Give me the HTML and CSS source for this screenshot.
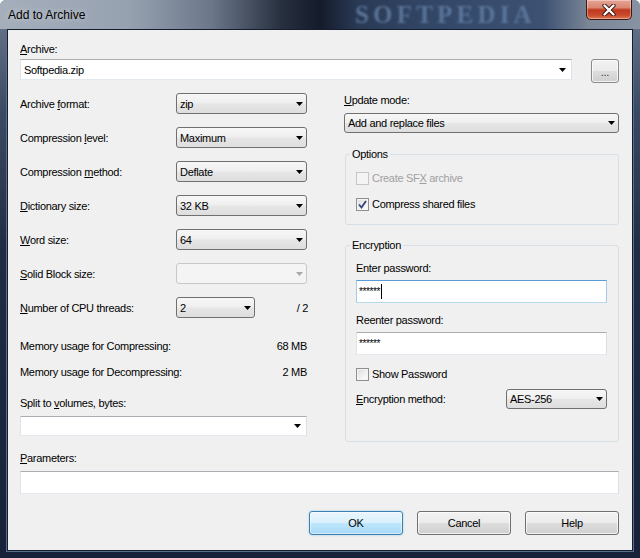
FILE: index.html
```html
<!DOCTYPE html>
<html>
<head>
<meta charset="utf-8">
<title>Add to Archive</title>
<link rel="stylesheet" href="styles.css">
</head>
<body>
<div class="window">
  <div class="titlebar">
    <span class="title">Add to Archive</span>
    <span class="watermark">SOFTPEDIA</span>
    <div class="close-btn">
      <svg width="14" height="12" viewBox="0 0 14 12"><path d="M2.5 1.5L11.5 10.5M11.5 1.5L2.5 10.5" stroke="#3a1510" stroke-width="4.2" stroke-linecap="round"/><path d="M2.5 1.5L11.5 10.5M11.5 1.5L2.5 10.5" stroke="#ffffff" stroke-width="2.4" stroke-linecap="round"/></svg>
    </div>
  </div>
  <div class="client">
    <div class="lbl"><u>A</u>rchive:</div>
    <div class="archive-row">
      <div class="combo edit archive-combo"><span class="val">Softpedia.zip</span><svg class="arrow" viewBox="0 0 7 4"><path d="M0 0H7L3.5 4Z"/></svg></div>
      <div class="btn browse">...</div>
    </div>

    <div class="columns">
      <div class="col-left">
        <div class="rows">
          <div class="row"><span class="row-label">Archive <u>f</u>ormat:</span><div class="combo"><span class="val">zip</span><svg class="arrow" viewBox="0 0 7 4"><path d="M0 0H7L3.5 4Z"/></svg></div></div>
          <div class="row"><span class="row-label">Compression <u>l</u>evel:</span><div class="combo"><span class="val">Maximum</span><svg class="arrow" viewBox="0 0 7 4"><path d="M0 0H7L3.5 4Z"/></svg></div></div>
          <div class="row"><span class="row-label">Compression <u>m</u>ethod:</span><div class="combo"><span class="val">Deflate</span><svg class="arrow" viewBox="0 0 7 4"><path d="M0 0H7L3.5 4Z"/></svg></div></div>
          <div class="row"><span class="row-label"><u>D</u>ictionary size:</span><div class="combo"><span class="val">32 KB</span><svg class="arrow" viewBox="0 0 7 4"><path d="M0 0H7L3.5 4Z"/></svg></div></div>
          <div class="row"><span class="row-label"><u>W</u>ord size:</span><div class="combo"><span class="val">64</span><svg class="arrow" viewBox="0 0 7 4"><path d="M0 0H7L3.5 4Z"/></svg></div></div>
          <div class="row"><span class="row-label"><u>S</u>olid Block size:</span><div class="combo disabled"><span class="val"></span><svg class="arrow" viewBox="0 0 7 4"><path d="M0 0H7L3.5 4Z"/></svg></div></div>
          <div class="row"><span class="row-label"><u>N</u>umber of CPU threads:</span><div class="combo narrow"><span class="val">2</span><svg class="arrow" viewBox="0 0 7 4"><path d="M0 0H7L3.5 4Z"/></svg></div><span class="threads-max">/ 2</span></div>
        </div>
        <div class="mem">
          <div class="mem-row"><span>Memory usage for Compressing:</span><span>68 MB</span></div>
          <div class="mem-row second"><span>Memory usage for Decompressing:</span><span>2 MB</span></div>
        </div>
        <div class="lbl split-label">Split to <u>v</u>olumes, bytes:</div>
        <div class="combo edit split-combo"><span class="val"></span><svg class="arrow" viewBox="0 0 7 4"><path d="M0 0H7L3.5 4Z"/></svg></div>
      </div>

      <div class="col-right">
        <div class="lbl"><u>U</u>pdate mode:</div>
        <div class="combo update-combo"><span class="val">Add and replace files</span><svg class="arrow" viewBox="0 0 7 4"><path d="M0 0H7L3.5 4Z"/></svg></div>

        <fieldset class="group options">
          <legend>Options</legend>
          <div class="check-row disabled"><span class="checkbox"></span><span>Create SF<u>X</u> archive</span></div>
          <div class="check-row second"><span class="checkbox checked"><svg viewBox="0 0 11 11"><path d="M2 5.5L4.5 8.5L9 2" fill="none" stroke="#34487e" stroke-width="1.9"/></svg></span><span>Compress shared files</span></div>
        </fieldset>

        <fieldset class="group encryption">
          <legend>Encryption</legend>
          <div class="lbl">Enter password:</div>
          <div class="textbox pw focused"><span class="stars">******</span><span class="caret"></span></div>
          <div class="lbl reenter">Reenter password:</div>
          <div class="textbox pw"><span class="stars">******</span></div>
          <div class="check-row show-pw"><span class="checkbox"></span><span>Show Password</span></div>
          <div class="enc-row"><span><u>E</u>ncryption method:</span><div class="combo enc-combo"><span class="val">AES-256</span><svg class="arrow" viewBox="0 0 7 4"><path d="M0 0H7L3.5 4Z"/></svg></div></div>
        </fieldset>
      </div>
    </div>

    <div class="lbl params-label"><u>P</u>arameters:</div>
    <div class="textbox params"></div>

    <div class="buttons">
      <div class="btn default">OK</div>
      <div class="btn">Cancel</div>
      <div class="btn">Help</div>
    </div>
  </div>
</div>
</body>
</html>
```

FILE: styles.css
```css
* { box-sizing: border-box; }

body {
  margin: 0;
  background: #ffffff;
  font-family: "Liberation Sans", Arial, sans-serif;
  font-size: 11px;
  letter-spacing: -0.3px;
  color: #000;
}

u { text-decoration: underline; text-underline-offset: 1px; }

.window {
  width: 640px;
  height: 558px;
  display: flex;
  flex-direction: column;
  position: relative;
  overflow: hidden;
  border-radius: 6px 6px 0 0;
  background: linear-gradient(180deg, #6d7b92 0%, #3b4a64 20%, #1f2c46 45%, #17223a 100%);
}

.titlebar {
  height: 29px;
  flex: none;
  display: flex;
  align-items: center;
  padding-left: 8px;
  position: relative;
  background: linear-gradient(90deg, #a5aebb 0%, #97a2b1 20%, #6b778a 33%, #27303f 44%, #141b2a 50%, #2a3a55 56%, #34496a 70%, #3d5273 85%, #7b8696 92%, #8792a2 100%);
}

.title {
  font-size: 12px;
  letter-spacing: 0;
  color: #000;
  position: relative;
  z-index: 1;
  text-shadow: 0 0 6px rgba(255,255,255,0.6);
}

.watermark {
  position: absolute;
  left: 355px;
  top: 2px;
  font-family: "Liberation Serif", serif;
  font-weight: bold;
  font-size: 25px;
  line-height: 25px;
  letter-spacing: 4.2px;
  color: #5e799e;
  filter: blur(0.9px);
  opacity: 0.9;
}

.close-btn {
  position: absolute;
  top: 0;
  right: 8px;
  width: 46px;
  height: 20px;
  border: 1px solid #3d1a16;
  border-top: none;
  border-radius: 0 0 5px 5px;
  background: linear-gradient(180deg, #e6a596 0%, #d98672 40%, #c0391e 52%, #c84a2c 80%, #e07a52 100%);
  box-shadow: inset 0 0 0 1px rgba(255,255,255,0.35);
  display: flex;
  align-items: center;
  justify-content: center;
}

.close-btn svg { width: 14px; height: 12px; display: block; }

.client {
  flex: 1;
  margin: 0 7px 7px 7px;
  background: #f0f0f0;
  border: 1px solid #141d2e;
  box-shadow: 0 0 0 1px #5d6e89;
  padding: 12px 13px 0 12px;
  display: flex;
  flex-direction: column;
}

.lbl { line-height: 14px; height: 14px; white-space: nowrap; }

.archive-row {
  margin-top: 3px;
  display: flex;
  align-items: flex-start;
  gap: 19px;
}

.combo {
  height: 21px;
  border: 1px solid #707070;
  border-radius: 3px;
  background: linear-gradient(180deg, #f7f7f7 0%, #efefef 48%, #e6e6e6 52%, #dedede 100%);
  display: flex;
  align-items: center;
  padding-left: 3px;
  flex: none;
}

.combo .val { white-space: nowrap; }

.arrow {
  width: 7px;
  height: 4px;
  margin-left: auto;
  margin-right: 3px;
  display: block;
  fill: #000;
}

.combo.edit {
  background: #ffffff;
  border-radius: 0;
  border-color: #abadb3 #dbdfe6 #e3e9ef #e2e3ea;
}

.combo.edit .arrow { margin-right: 5px; }

.combo.disabled {
  background: #f4f4f4;
  border-color: #c8c8c8;
}
.combo.disabled .arrow { fill: #a8a8a8; }

.archive-combo { width: 552px; height: 21px; }

.btn {
  height: 24px;
  width: 94px;
  border: 1px solid #707070;
  border-radius: 3px;
  background: linear-gradient(180deg, #f2f2f2 0%, #ebebeb 48%, #dddddd 52%, #cfcfcf 100%);
  box-shadow: inset 0 0 0 1px rgba(255,255,255,0.7);
  display: flex;
  align-items: center;
  justify-content: center;
  flex: none;
}

.btn.browse {
  width: 28px;
  height: 24px;
  align-items: flex-end;
  padding-bottom: 5px;
  line-height: 10px;
  color: #333;
  border-color: #8a8a8a;
}

.btn.default {
  border-color: #3c7fb1;
  background: linear-gradient(180deg, #eaf6fd 0%, #d9f0fc 48%, #bee6fd 52%, #a7d9f5 100%);
  box-shadow: inset 0 0 0 1px rgba(255,255,255,0.5), 0 0 2px rgba(80,170,230,0.6);
}

.columns {
  margin-top: 10px;
  display: flex;
  justify-content: space-between;
  align-items: flex-start;
}

.col-left { width: 287px; display: flex; flex-direction: column; }
.col-right { width: 275px; display: flex; flex-direction: column; }

.rows { display: flex; flex-direction: column; gap: 13px; }

.row {
  display: flex;
  align-items: center;
  height: 21px;
}

.row-label { width: 156px; flex: none; white-space: nowrap; }
.row .combo { width: 131px; }
.row .combo.narrow { width: 79px; }

.threads-max { margin-left: auto; margin-right: -1px; }

.mem { margin-top: 21px; }
.mem-row {
  display: flex;
  justify-content: space-between;
  line-height: 14px;
  height: 14px;
  white-space: nowrap;
}
.mem-row.second { margin-top: 12px; }

.split-label { margin-top: 17px; }
.split-combo { margin-top: 6px; width: 287px; height: 20px; }

.update-combo { margin-top: 6px; width: 275px; height: 20px; }

.group {
  margin: 0 0 0 1px;
  border: 1px solid #d5dfe5;
  border-radius: 3px;
  padding: 9px 11px 12px 10px;
  min-width: 0;
}

.group legend {
  padding: 0 2px;
  margin-left: -6px;
  line-height: 14px;
}

.options { margin-top: 14px; }
.encryption { margin-top: 13px; padding-bottom: 32px; }

.check-row {
  display: flex;
  align-items: center;
  gap: 3px;
  height: 16px;
  white-space: nowrap;
}
.check-row.second { margin-top: 10px; }
.check-row.disabled { color: #a0a0a0; }

.checkbox {
  width: 13px;
  height: 13px;
  flex: none;
  border: 1px solid #8e8f8f;
  background: linear-gradient(135deg, #dcdcdc 0%, #f2f2f2 60%, #ffffff 100%);
  box-shadow: inset 0 0 0 1px #f4f4f4;
  display: flex;
  align-items: center;
  justify-content: center;
}
.check-row.disabled .checkbox {
  border-color: #c6c6c6;
  background: #f4f4f4;
  box-shadow: none;
}
.checkbox svg { width: 11px; height: 11px; display: block; }

.textbox {
  height: 23px;
  background: #ffffff;
  border: 1px solid;
  border-color: #abadb3 #dbdfe6 #e3e9ef #e2e3ea;
}

.textbox.pw {
  margin-top: 5px;
  display: flex;
  align-items: center;
  padding-left: 2px;
}

.textbox.focused {
  border-color: #5a9bd5 #a7c8e6 #b7d9ed #a7c8e6;
}

.stars { font-size: 10px; letter-spacing: -0.4px; line-height: 14px; }

.caret {
  display: inline-block;
  width: 1px;
  height: 15px;
  background: #000;
  margin-left: 1px;
}

.reenter { margin-top: 10px; }
.show-pw { margin-top: 11px; }

.enc-row {
  margin-top: 7px;
  display: flex;
  align-items: center;
  white-space: nowrap;
}
.enc-combo { width: 101px; height: 20px; margin-left: auto; }

.params-label { margin-top: 9px; }
.textbox.params { margin-top: 6px; height: 23px; }

.buttons {
  margin-top: 17px;
  display: flex;
  justify-content: flex-end;
  gap: 14px;
}
```
